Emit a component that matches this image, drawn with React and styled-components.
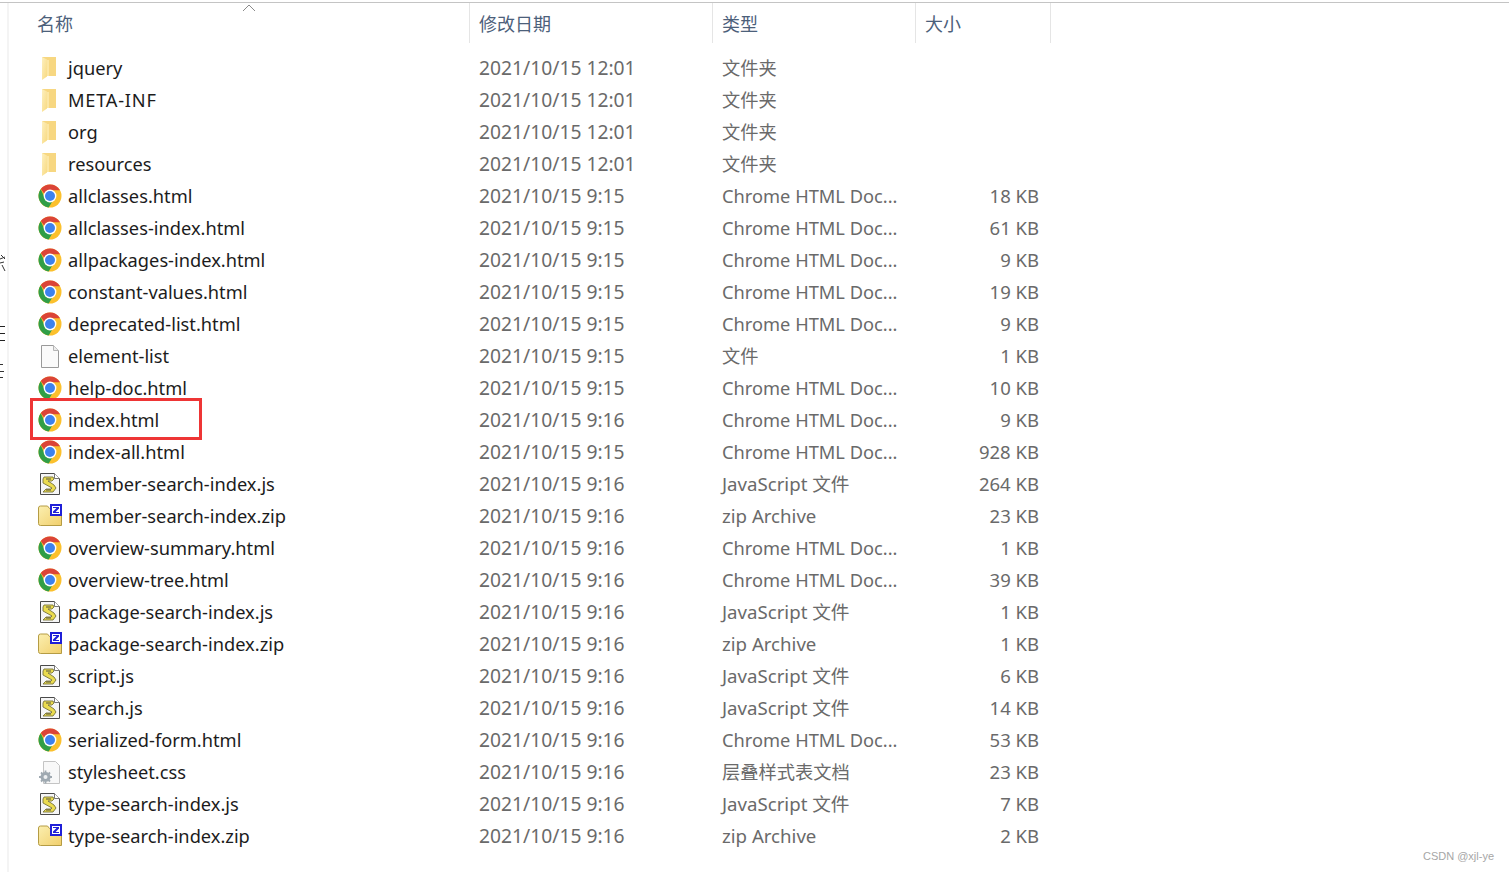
import React from "react";
import styled, { createGlobalStyle } from "styled-components";

const Global = createGlobalStyle`
  html, body { margin: 0; padding: 0; background: #fff; overflow: hidden; }
  body { width: 1509px; height: 872px; font-family: "Noto Sans", "Noto Sans CJK SC", sans-serif; }
`;

const Page = styled.div`
  position: relative;
  width: 1509px;
  height: 872px;
  box-sizing: border-box;
  padding-top: 2px;
  background: #fff;
  overflow: hidden;
`;
const TopRule = styled.div`
  height: 1px;
  background: #c4c4c4;
`;
const Body = styled.div`
  display: grid;
  grid-template-columns: 8px 1fr;
  height: 869px;
`;
const Gutter = styled.div`
  border-right: 2px solid #f4f4f4;
  box-sizing: border-box;
  width: 9px;
`;
const Table = styled.div`
  padding-left: 21px;
`;
const COLS = "441px 243px 203px 135px";
const Header = styled.div`
  display: grid;
  grid-template-columns: ${COLS};
  height: 40px;
  position: relative;
`;
const HeaderCell = styled.div`
  border-right: 1px solid #e5e5e5;
  box-sizing: border-box;
  padding-left: ${(p) => p.$pad}px;
  font: 18px/40px "Noto Sans CJK SC", sans-serif;
  color: #4c607a;
`;
const Caret = styled.svg`
  position: absolute;
  left: 213px;
  top: 1px;
`;
const Rows = styled.div`
  padding-top: 9px;
`;
const Row = styled.div`
  display: grid;
  grid-template-columns: ${COLS};
  height: 32px;
  align-items: center;
  line-height: 32px;
  white-space: nowrap;
`;
const NameCell = styled.div`
  display: flex;
  align-items: center;
  gap: 6px;
  padding-left: 9px;
  color: #1c1c1c;
  font-size: 18.25px;
`;
const NameText = styled.span`
  letter-spacing: ${(p) => (p.$caps ? "0.75px" : "0")};
`;
const IconBox = styled.span`
  display: flex;
  width: 24px;
  height: 24px;
  flex: none;
`;
const DateCell = styled.div`
  color: #6a6a6a;
  padding-left: 9px;
  font-size: 19.25px;
`;
const TypeCell = styled.div`
  color: #6a6a6a;
  padding-left: 9px;
  font-size: ${(p) => (p.$wide ? "18.65px" : "18.25px")};
`;
const SizeCell = styled.div`
  color: #6a6a6a;
  text-align: right;
  padding-right: 12px;
  font-size: 18.5px;
`;
const Highlight = styled.div`
  position: absolute;
  left: 30px;
  top: 398px;
  width: 172px;
  height: 42px;
  box-sizing: border-box;
  border: 3px solid #ee3535;
  pointer-events: none;
`;
const Watermark = styled.div`
  position: absolute;
  right: 15px;
  top: 849px;
  font: 11px/14px "Liberation Sans", sans-serif;
  color: #a6a6a6;
`;
const EdgeMarks = styled.svg`
  position: absolute;
  left: 0;
  top: 250px;
`;

const Folder = () => (
  <svg width="24" height="24" viewBox="0 0 24 24">
    <defs>
      <linearGradient id="fo" x1="0" y1="0" x2="1" y2="1">
        <stop offset="0" stopColor="#fdf0c0" />
        <stop offset="1" stopColor="#f8d97f" />
      </linearGradient>
    </defs>
    <path d="M4 1h14v19H4z" fill="#f7d781" />
    <path d="M4 1l5 2.500v17L4 24z" fill="url(#fo)" />
    <path d="M9 4h2v16H9z" fill="#fbe6a4" />
  </svg>
);

const Chrome = () => (
  <svg width="24" height="24" viewBox="0 0 24 24">
    <circle cx="12" cy="12" r="11.500" fill="#fbc02d" />
    <path d="M12 .5A11.500 11.500 0 0 1 22 6.300L12 6.300 6.500 10 2.800 5A11.500 11.500 0 0 1 12 .5z" fill="#db4437" />
    <path d="M2.700 5.200A11.500 11.500 0 0 0 10.700 23.400L15.800 15 12 17.500 7.400 15z" fill="#309e47" />
    <circle cx="12" cy="12" r="6.400" fill="#fff" />
    <circle cx="12" cy="12" r="5" fill="#3d82ee" />
  </svg>
);

const Blank = () => (
  <svg width="24" height="24" viewBox="0 0 24 24">
    <path d="M3.500 1.500h12l5 5v17h-17z" fill="#fafafa" stroke="#9a9a9a" />
    <path d="M15.500 1.500v5h5" fill="#ececec" stroke="#b5b5b5" />
  </svg>
);

const Script = () => (
  <svg width="24" height="24" viewBox="0 0 24 24">
    <path d="M2.500 1.500h14l5 5v16h-19z" fill="#f6f6f6" stroke="#4a4a4a" />
    <path d="M16.500 1.500v5h5" fill="#fff" stroke="#777" />
    <path d="M6 5h9l1 2-2 2H10l6 4 2 3-3 4H5l3-3h5l1-1-9-5V7z" fill="#eadb4e" stroke="#77733a" strokeWidth="0.9" />
    <path d="M8 7h5M8 18h5" stroke="#444" strokeWidth="0.9" />
  </svg>
);

const Zip = () => (
  <svg width="24" height="24" viewBox="0 0 24 24">
    <defs>
      <linearGradient id="zi" x1="0" y1="0" x2="1" y2="1">
        <stop offset="0" stopColor="#fbefb0" />
        <stop offset="1" stopColor="#f1cf6c" />
      </linearGradient>
    </defs>
    <path d="M.5 4q0-2 2-2h7l2 2.500h12v17H2.500q-2 0-2-2z" fill="url(#zi)" stroke="#b59c44" />
    <rect x="12" y="0" width="12" height="12" fill="#1f1fd8" />
    <rect x="14" y="2" width="8" height="8" fill="#fff" />
    <path d="M15 3h6v1.500L17.500 8H21v1h-6V7.500L18.500 4H15z" fill="#1f1fd8" />
  </svg>
);

const Css = () => (
  <svg width="24" height="24" viewBox="0 0 24 24">
    <path d="M5.500 1.500h12l4 4v18h-16z" fill="#f8f8f8" stroke="#c4c4c4" />
    <circle cx="7.500" cy="17" r="5" fill="#9fa9b1" />
    <circle cx="7.500" cy="17" r="2" fill="#eef0f2" />
    <path d="M7.500 10.500v2M7.500 21.500v2M1 17h2M12 17h2M3 12.500l1.500 1.500M12 12.500L10.500 14M3 21.500L4.500 20M12 21.500L10.500 20" stroke="#9fa9b1" strokeWidth="1.800" />
  </svg>
);

const ICONS = { folder: Folder, chrome: Chrome, blank: Blank, script: Script, zip: Zip, css: Css };

const CH = "Chrome HTML Doc...";
const JS = "JavaScript 文件";
const ZA = "zip Archive";
const D1 = "2021/10/15 12:01";
const D5 = "2021/10/15 9:15";
const D6 = "2021/10/15 9:16";
const FD = "文件夹";

const FILES = [
  ["folder", "jquery", D1, FD, ""],
  ["folder", "META-INF", D1, FD, ""],
  ["folder", "org", D1, FD, ""],
  ["folder", "resources", D1, FD, ""],
  ["chrome", "allclasses.html", D5, CH, "18 KB"],
  ["chrome", "allclasses-index.html", D5, CH, "61 KB"],
  ["chrome", "allpackages-index.html", D5, CH, "9 KB"],
  ["chrome", "constant-values.html", D5, CH, "19 KB"],
  ["chrome", "deprecated-list.html", D5, CH, "9 KB"],
  ["blank", "element-list", D5, "文件", "1 KB"],
  ["chrome", "help-doc.html", D5, CH, "10 KB"],
  ["chrome", "index.html", D6, CH, "9 KB"],
  ["chrome", "index-all.html", D5, CH, "928 KB"],
  ["script", "member-search-index.js", D6, JS, "264 KB"],
  ["zip", "member-search-index.zip", D6, ZA, "23 KB"],
  ["chrome", "overview-summary.html", D6, CH, "1 KB"],
  ["chrome", "overview-tree.html", D6, CH, "39 KB"],
  ["script", "package-search-index.js", D6, JS, "1 KB"],
  ["zip", "package-search-index.zip", D6, ZA, "1 KB"],
  ["script", "script.js", D6, JS, "6 KB"],
  ["script", "search.js", D6, JS, "14 KB"],
  ["chrome", "serialized-form.html", D6, CH, "53 KB"],
  ["css", "stylesheet.css", D6, "层叠样式表文档", "23 KB"],
  ["script", "type-search-index.js", D6, JS, "7 KB"],
  ["zip", "type-search-index.zip", D6, ZA, "2 KB"],
];

export default function App() {
  return (
    <Page>
      <Global />
      <TopRule />
      <Body>
        <Gutter />
        <Table>
          <Header>
            <HeaderCell $pad={8}>名称</HeaderCell>
            <HeaderCell $pad={9}>修改日期</HeaderCell>
            <HeaderCell $pad={9}>类型</HeaderCell>
            <HeaderCell $pad={9}>大小</HeaderCell>
            <Caret width="14" height="8" viewBox="0 0 14 8">
              <path d="M1 7l6-6 6 6" fill="none" stroke="#8a8a8a" />
            </Caret>
          </Header>
          <Rows>
            {FILES.map(([icon, name, date, type, size]) => {
              const Icon = ICONS[icon];
              return (
                <Row key={name}>
                  <NameCell>
                    <IconBox><Icon /></IconBox>
                    <NameText $caps={name === name.toUpperCase()}>{name}</NameText>
                  </NameCell>
                  <DateCell>{date}</DateCell>
                  <TypeCell $wide={type === JS || type === ZA}>{type}</TypeCell>
                  <SizeCell>{size}</SizeCell>
                </Row>
              );
            })}
          </Rows>
        </Table>
      </Body>
      <EdgeMarks width="6" height="130" viewBox="0 0 6 130">
        <path d="M0 9l5 -2M1 5l4 4M0 13l4 -1M2 15l3 6" fill="none" stroke="#333" strokeWidth="1" />
        <path d="M0 76.500h5M0 83.500h5M0 90.500h5" fill="none" stroke="#222" strokeWidth="1" />
        <path d="M0 114.500h3M0 121.500h4M0 127.500h3" fill="none" stroke="#333" strokeWidth="1" />
      </EdgeMarks>
      <Highlight />
      <Watermark>CSDN @xjl-ye</Watermark>
    </Page>
  );
}
